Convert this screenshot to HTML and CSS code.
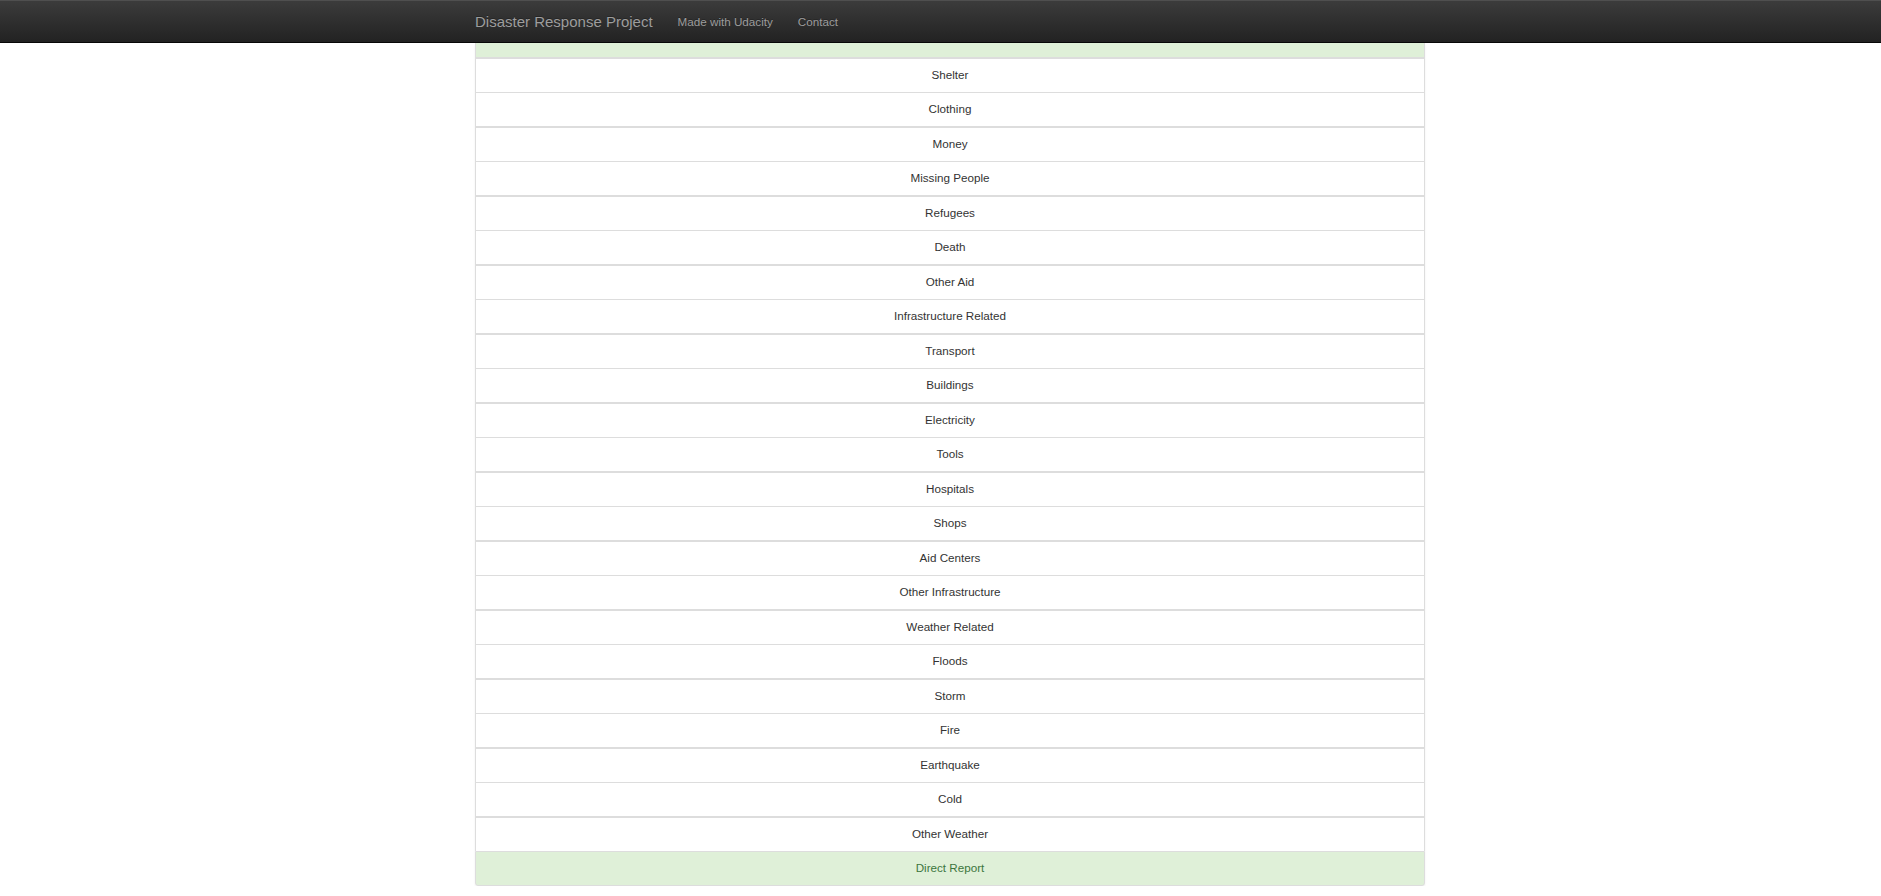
FILE: index.html
```html
<!DOCTYPE html>
<html lang="en">
<head>
    <meta charset="UTF-8">
    <title>Disaster Response Project</title>
    <link rel="stylesheet" href="styles.css">
</head>
<body>
<nav class="navbar">
    <div class="container navbar-inner">
        <a class="navbar-brand" href="#">Disaster Response Project</a>
        <a class="nav-link" href="#">Made with Udacity</a>
        <a class="nav-link" href="#">Contact</a>
    </div>
</nav>

<!-- classification results, one row per category -->
<div class="container">
    <ul class="list-group">
        <li class="list-group-item list-group-item-success list-cap"></li>
        <li class="list-group-item">Shelter</li>
        <li class="list-group-item">Clothing</li>
        <li class="list-group-item">Money</li>
        <li class="list-group-item">Missing People</li>
        <li class="list-group-item">Refugees</li>
        <li class="list-group-item">Death</li>
        <li class="list-group-item">Other Aid</li>
        <li class="list-group-item">Infrastructure Related</li>
        <li class="list-group-item">Transport</li>
        <li class="list-group-item">Buildings</li>
        <li class="list-group-item">Electricity</li>
        <li class="list-group-item">Tools</li>
        <li class="list-group-item">Hospitals</li>
        <li class="list-group-item">Shops</li>
        <li class="list-group-item">Aid Centers</li>
        <li class="list-group-item">Other Infrastructure</li>
        <li class="list-group-item">Weather Related</li>
        <li class="list-group-item">Floods</li>
        <li class="list-group-item">Storm</li>
        <li class="list-group-item">Fire</li>
        <li class="list-group-item">Earthquake</li>
        <li class="list-group-item">Cold</li>
        <li class="list-group-item">Other Weather</li>
        <li class="list-group-item list-group-item-success">Direct Report</li>
    </ul>
</div>
</body>
</html>
```

FILE: styles.css
```css
body {
    margin: 0;
    font-family: "Liberation Sans", Arial, Helvetica, sans-serif;
    font-size: 11.67px;
    color: #333;
    background: #fff;
}
.container {
    width: 950px;
    margin: 0 auto;
    padding-left: 19px;
}

/* top bar */
.navbar {
    height: 42px;
    background-image: linear-gradient(to bottom, #3c3c3c 0, #222 100%);
    border-bottom: 1px solid #080808;
    box-shadow: inset 0 1px 0 rgba(255,255,255,0.1);
}
.navbar-inner {
    display: flex;
    align-items: center;
    height: 42px;
}
.navbar-brand {
    font-size: 15px;
    color: #9d9d9d;
    text-decoration: none;
    text-shadow: 0 -1px 0 rgba(0,0,0,0.25);
    margin-right: 12.5px;
}
.nav-link {
    font-size: 11.67px;
    color: #9d9d9d;
    text-decoration: none;
    text-shadow: 0 -1px 0 rgba(0,0,0,0.25);
    padding: 0 12.5px;
}

/* category list */
.list-group {
    list-style: none;
    margin: 0;
    padding: 0;
    border-radius: 3px;
    box-shadow: 0 1px 2px rgba(0,0,0,0.075);
}
.list-group-item {
    height: 33px;
    line-height: 31px;
    text-align: center;
    background: #fff;
    border: 1px solid #ddd;
    border-bottom: 0;
}
.list-group-item:nth-child(even) {
    border-top-width: 2px;
}
.list-group-item:last-child {
    border-bottom: 1px solid #ddd;
    border-radius: 0 0 3px 3px;
}
.list-group-item-success {
    background: #dff0d8;
    color: #3c763d;
}
.list-cap {
    height: 14px;
    border-top: 0;
}
```
